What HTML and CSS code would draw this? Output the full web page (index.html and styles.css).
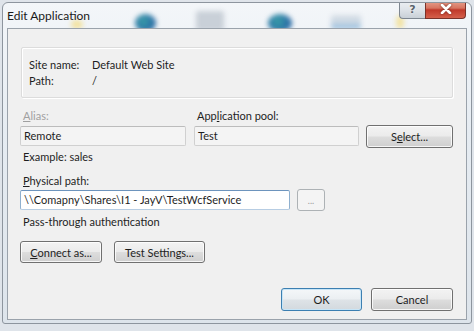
FILE: index.html
```html
<!DOCTYPE html>
<html lang="en">
<head>
    <meta charset="UTF-8">
    <title>Edit Application</title>
    <link rel="stylesheet" href="styles.css">
</head>
<body>
    <div class="window">
        <!-- размытые значки рабочего стола за стеклом -->
        <div class="glass-blob blob-yellow"></div>
        <div class="glass-blob blob-globe g1"></div>
        <div class="glass-blob blob-gray g2"></div>
        <div class="glass-blob blob-globe g3"></div>
        <div class="glass-blob blob-gray g4"></div>
        <div class="glass-blob blob-yellow g5"></div>

        <div class="titlebar">
            <div class="title">Edit Application</div>
            <div class="caption-buttons">
                <div class="cap-btn help">?</div>
                <div class="cap-btn close">
                    <svg viewBox="0 0 12 10" width="12" height="10">
                        <path d="M2 1 L10 9 M10 1 L2 9" stroke="#fff" stroke-width="2.6" stroke-linecap="round"/>
                    </svg>
                </div>
            </div>
        </div>

        <div class="client">
            <div class="group">
                <div class="info-row"><span class="info-key">Site name:</span><span>Default Web Site</span></div>
                <div class="info-row"><span class="info-key">Path:</span><span>/</span></div>
            </div>

            <div class="fields">
                <div class="field alias">
                    <div class="label disabled"><u>A</u>lias:</div>
                    <div class="textbox readonly">Remote</div>
                </div>
                <div class="field pool">
                    <div class="label">App<u>l</u>ication pool:</div>
                    <div class="textbox readonly">Test</div>
                </div>
                <div class="btn select">S<u>e</u>lect...</div>
            </div>

            <div class="hint">Example: sales</div>

            <div class="label path-label"><u>P</u>hysical path:</div>
            <div class="path-row">
                <div class="textbox path-box">\\Comapny\Shares\I1 - JayV\TestWcfService</div>
                <div class="btn browse">...</div>
            </div>

            <div class="hint auth">Pass-through authentication</div>

            <div class="btn-row">
                <div class="btn connect"><u>C</u>onnect as...</div>
                <div class="btn test">Test Settin<u>g</u>s...</div>
            </div>

            <div class="footer">
                <div class="btn ok default">OK</div>
                <div class="btn cancel">Cancel</div>
            </div>
        </div>
    </div>
</body>
</html>
```

FILE: styles.css
```css
body {
    margin: 0;
    width: 474px;
    height: 331px;
    overflow: hidden;
    background: #dfe4ea;
    font-family: 'Lato', 'Open Sans', sans-serif;
    font-size: 11px;
    color: #1e1e1e;
}
.window {
    position: relative;
    margin: 2px 2px 0 2px;
    height: 320px;
    border: 1px solid #8d959e;
    border-radius: 6px 6px 3px 3px;
    background: linear-gradient(180deg, #f3f6f9 0%, #e6ecf2 40%, #dde4eb 100%);
    overflow: hidden;
}
/* размытые пятна за стеклом */
.glass-blob {
    position: absolute;
    top: 11px;
    height: 18px;
    border-radius: 50%;
    filter: blur(2.5px);
}
.blob-globe { background: radial-gradient(circle at 40% 40%, #3aa0a8 0%, #2a6fa6 60%, #2c5fa0 100%); }
.blob-gray { background: #c9d0d8; border-radius: 3px; }
.blob-yellow { left: 68px; top: 17px; width: 12px; height: 9px; background: #f2e2a0; }
.g1 { left: 132px; width: 21px; }
.g2 { left: 193px; width: 28px; top: 8px; height: 20px; }
.g3 { left: 265px; width: 24px; }
.g4 { left: 328px; width: 30px; top: 12px; height: 14px; background: linear-gradient(180deg, #d8dfe6 0%, #c8d6e3 60%, #7fb2dc 100%); }
.g5 { left: 393px; width: 8px; top: 12px; height: 14px; }

.titlebar {
    position: relative;
    display: flex;
    height: 25px;
}
.title {
    flex: 1;
    padding-left: 4px;
    padding-top: 5px;
    font-size: 12px;
    color: #1a1a1a;
}
.caption-buttons {
    display: flex;
    margin-top: -3px;
    margin-right: 5px;
    height: 19px;
}
.cap-btn {
    display: flex;
    justify-content: center;
    align-items: center;
    height: 18px;
    border: 1px solid #7e8791;
    border-top: none;
}
.help {
    width: 25px;
    border-radius: 0 0 0 4px;
    border-right: none;
    background: linear-gradient(180deg, #eef1f4 0%, #dfe4e9 50%, #c9d0d7 100%);
    color: #5a636c;
    font-family: 'DejaVu Sans', sans-serif;
    font-weight: bold;
    font-size: 11px;
    text-shadow: 0 0 2px #fff;
}
.close {
    width: 39px;
    border-color: #7a3229;
    border-radius: 0 0 4px 0;
    background: linear-gradient(180deg, #e9a794 0%, #d77460 45%, #c0392a 55%, #d4604b 100%);
}
.close svg {
    display: block;
    filter: drop-shadow(0 0 1px #6a1f17);
}

.client {
    position: relative;
    margin: 0 4px;
    height: 290px;
    border: 1px solid #9aa2ab;
    background: #f0f0f0;
    padding: 0 13px 0 12px;
}
.group {
    margin: 18px 0 0 1px;
    height: 40px;
    border: 1px solid #dcdcdc;
    box-shadow: inset 1px 1px 0 #fff, 1px 1px 0 #fff;
    border-radius: 2px;
    padding: 9px 0 0 7px;
}
.info-row {
    display: flex;
    height: 16px;
    line-height: 16px;
}
.info-key {
    width: 63px;
}

.fields {
    display: flex;
    align-items: flex-end;
    margin-top: 10px;
}
.field {
    display: flex;
    flex-direction: column;
}
.alias { width: 166px; margin-right: 8px; }
.pool { width: 165px; margin-right: 7px; }
.label {
    height: 16px;
    line-height: 16px;
    padding-left: 3px;
    margin-bottom: 2px;
}
.disabled { color: #a0a0a0; }
.textbox {
    height: 18px;
    line-height: 18px;
    padding-left: 3px;
    background: #fff;
    border: 1px solid #abadb3;
    border-left-color: #e2e3ea;
    border-right-color: #dbdfe6;
    border-bottom-color: #e3e9ef;
    border-radius: 2px;
    white-space: nowrap;
    overflow: hidden;
}
.readonly {
    background: #f4f4f4;
    border-color: #d0d0d0;
    border-top-color: #bcbcbc;
}

.btn {
    display: flex;
    justify-content: center;
    align-items: center;
    box-sizing: border-box;
    height: 22px;
    border: 1px solid #707070;
    border-radius: 3px;
    background: linear-gradient(180deg, #f3f3f3 0%, #ebebeb 48%, #dddddd 52%, #cfcfcf 100%);
    box-shadow: inset 0 0 0 1px rgba(255, 255, 255, 0.8);
    color: #1e1e1e;
}
.select {
    width: 87px;
    height: 23px;
    margin-bottom: -2px;
}
.hint {
    height: 16px;
    line-height: 16px;
    margin-top: 3px;
    padding-left: 3px;
}
.path-label {
    margin-top: 8px;
    margin-bottom: 0;
}
.path-row {
    display: flex;
    align-items: center;
    gap: 7px;
}
.path-box {
    width: 265px;
    border-color: #8fb0cf;
    border-top-color: #6d94bd;
    border-bottom-color: #b7cde3;
}
.browse {
    width: 28px;
    height: 22px;
    border-color: #adb2b5;
    background: #f4f4f4;
    color: #9a9a9a;
    font-size: 9px;
    box-shadow: none;
}
.auth {
    margin-top: 3px;
}
.btn-row {
    display: flex;
    gap: 12px;
    margin-top: 11px;
}
.connect { width: 82px; }
.test { width: 91px; }
.footer {
    display: flex;
    justify-content: flex-end;
    gap: 9px;
    margin-top: 25px;
}
.ok, .cancel {
    width: 81px;
    height: 23px;
}
.cancel { width: 82px; }
.default {
    border-color: #3c7fb1;
    box-shadow: inset 0 0 0 1px #c7e5f7;
    background: linear-gradient(180deg, #f4f7f9 0%, #ebeff2 48%, #dee3e7 52%, #d3d9de 100%);
}
```
